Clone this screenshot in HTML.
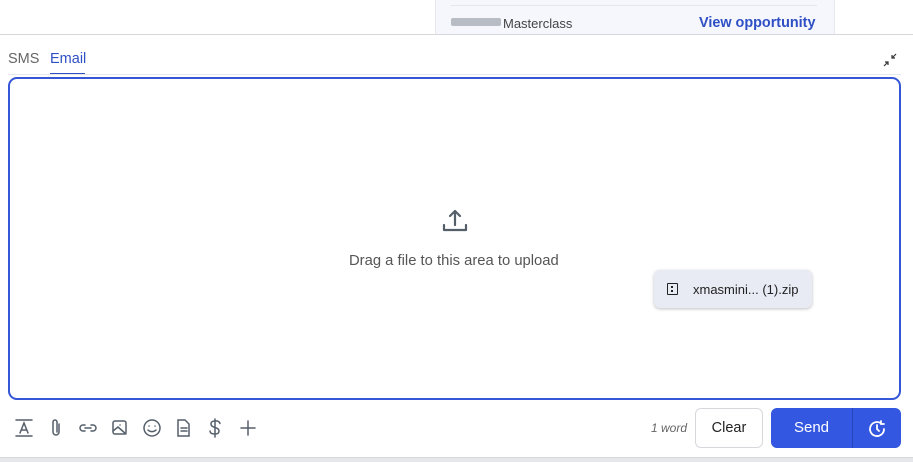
<!DOCTYPE html>
<html><head><style>
body{margin:0;width:913px;height:461px;overflow:hidden;background:#fff;font-family:"Liberation Sans",sans-serif;position:relative}
.abs{position:absolute}
svg{position:absolute}
</style></head><body>
<div class="abs" style="left:435px;top:0;width:398px;height:34px;background:#f5f7fd;border-left:1px solid #e5e7eb;border-right:1px solid #e5e7eb"></div>
<div class="abs" style="left:451px;top:5px;width:366px;height:1px;background:#e3e6ee"></div>
<div class="abs" style="left:451px;top:18px;width:50px;height:8px;background:#b8bcc4;border-radius:2px"></div>
<div class="abs" style="left:503px;top:16px;font-size:13px;color:#444">Masterclass</div>
<div class="abs" style="left:699px;top:15px;font-size:14.4px;font-weight:bold;color:#2f4fc4">View opportunity</div>
<div class="abs" style="left:0;top:34px;width:913px;height:1px;background:#d6d8dc"></div>
<div class="abs" style="left:8px;top:51px;font-size:14.5px;color:#666">SMS</div>
<div class="abs" style="left:50px;top:51px;font-size:14.5px;color:#2f4fc4">Email</div>
<div class="abs" style="left:50px;top:73px;width:35px;height:1px;background:#2f4fc4"></div>
<div class="abs" style="left:8px;top:74px;width:893px;height:1px;background:#e5e7eb"></div>
<svg style="left:883px;top:53px" width="14" height="14" viewBox="0 0 14 14" fill="none" stroke="#333" stroke-width="1.2"><path d="M13 1L9 5M9 2v3h3M1 13l4-4M5 12V9H2"/></svg>
<div class="abs" style="left:8px;top:77px;width:889px;height:319px;border:2px solid #3556d6;border-radius:9px"></div>
<svg style="left:441px;top:208px" width="28" height="28" viewBox="0 0 28 28" fill="none" stroke="#555f6a" stroke-width="2.2" stroke-linecap="round" stroke-linejoin="round"><path d="M14 3v14M9 8l5-5 5 5M3 17v5h22v-5"/></svg>
<div class="abs" style="left:349px;top:253px;font-size:14.8px;color:#555">Drag a file to this area to upload</div>
<div class="abs" style="left:654px;top:270px;width:158px;height:38px;background:#e8eaf4;border-radius:6px;box-shadow:0 1px 3px rgba(0,0,0,.25)"></div>
<div class="abs" style="left:667px;top:283px;width:9px;height:10px;border:1.5px solid #222;border-radius:1px"></div>
<div class="abs" style="left:671px;top:286px;width:2px;height:2px;background:#222"></div>
<div class="abs" style="left:671px;top:290px;width:2px;height:2px;background:#222"></div>
<div class="abs" style="left:693px;top:282px;font-size:13px;color:#222">xmasmini... (1).zip</div>
<svg style="left:14px;top:418px" width="250" height="20" viewBox="0 0 250 20" fill="none" stroke="#555f6a" stroke-width="1.5" stroke-linecap="round">
<path d="M2 2h16M2 18h16M6 15l4-10 4 10M7.5 12h5"/>
<path d="M45 6v8a3 3 0 0 1-6 0V4a2 2 0 0 1 4 0v10"/>
<path d="M71 7h-2a3 3 0 0 0 0 6h2M77 7h2a3 3 0 0 1 0 6h-2M71 10h6"/>
<rect x="99" y="3" width="13" height="13" rx="2"/><path d="M99 13l5-4 8 7M106 7h.1"/>
<circle cx="138" cy="10" r="8"/><path d="M134 12a5 4 0 0 0 8 0M135 8h.1M141 8h.1"/>
<path d="M164 2h7l4 4v12h-11zM167 10h6M167 13h6"/>
<path d="M201 1v18M206 5.5a4 3 0 0 0-5-2.5c-3 0-4 1-4 3s2 3 4 3.5 4 1.5 4 3.5-1 3-4 3-5-1-5-3"/>
<path d="M234 3v14M227 10h14"/>
</svg>
<div class="abs" style="left:651px;top:421px;font-size:12px;font-style:italic;color:#666">1 word</div>
<div class="abs" style="left:695px;top:408px;width:66px;height:38px;border:1px solid #d6d8dc;border-radius:6px;font-size:14.5px;color:#222;text-align:center;line-height:38px">Clear</div>
<div class="abs" style="left:771px;top:408px;width:130px;height:40px;background:#3357e0;border-radius:6px"></div>
<div class="abs" style="left:852px;top:408px;width:1px;height:40px;background:#2645b8"></div>
<div class="abs" style="left:771px;top:419px;width:81px;text-align:center;font-size:15px;color:#fff">Send</div>
<svg style="left:867px;top:419px" width="20" height="20" viewBox="0 0 20 20" fill="none" stroke="#fff" stroke-width="1.8" stroke-linecap="round"><path d="M17 10a7 7 0 1 1-3-5.7M10 6v4l2 2M14 2v3h3"/></svg>
<div class="abs" style="left:0;top:457px;width:913px;height:4px;background:#e6e7ea;border-top:1px solid #d6d8dc"></div>
</body></html>
